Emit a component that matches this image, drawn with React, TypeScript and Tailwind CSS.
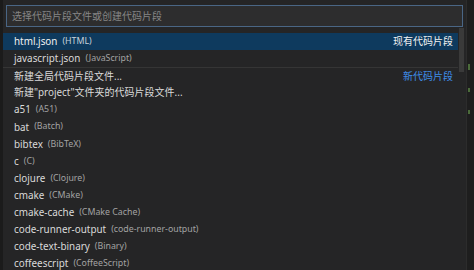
import React from "react";

const rows: { label: string; desc?: string; right?: string; rightBlue?: boolean; selected?: boolean; sepBefore?: boolean }[] = [
  { label: "html.json", desc: "(HTML)", right: "现有代码片段", selected: true },
  { label: "javascript.json", desc: "(JavaScript)" },
  { label: "新建全局代码片段文件...", right: "新代码片段", rightBlue: true, sepBefore: true },
  { label: "新建\"project\"文件夹的代码片段文件..." },
  { label: "a51", desc: "(A51)" },
  { label: "bat", desc: "(Batch)" },
  { label: "bibtex", desc: "(BibTeX)" },
  { label: "c", desc: "(C)" },
  { label: "clojure", desc: "(Clojure)" },
  { label: "cmake", desc: "(CMake)" },
  { label: "cmake-cache", desc: "(CMake Cache)" },
  { label: "code-runner-output", desc: "(code-runner-output)" },
  { label: "code-text-binary", desc: "(Binary)" },
  { label: "coffeescript", desc: "(CoffeeScript)" },
];

function Mixed({ text }: { text: string }) {
  const parts = text.split(/([\u4e00-\u9fff]+)/).filter((p) => p.length > 0);
  return (
    <>
      {parts.map((p, i) =>
        /[\u4e00-\u9fff]/.test(p) ? (
          <span key={i} className="text-[10px]">{p}</span>
        ) : (
          <span key={i}>{p}</span>
        )
      )}
    </>
  );
}

export default function App() {
  const font = { fontFamily: '"Noto Sans", "Noto Sans CJK SC", sans-serif' };
  return (
    <div className="w-[474px] h-[270px] bg-[#1e1e1e] flex overflow-hidden" style={font}>
      <div className="w-[3px] bg-[#1b1b1b]" />
      <div className="w-[463px] h-full bg-[#252526] flex flex-col relative">
        <div className="pl-[3px] pr-[3px] pt-[5px]">
          <div className="h-[22px] border border-[#4a6685] bg-[#2d2d2e] flex items-center pl-[5px] text-[10px] text-[#858585]">
            选择代码片段文件或创建代码片段
          </div>
        </div>
        <div className="mt-[6px] flex flex-col">
          {rows.map((r, i) => (
            <div
              key={i}
              className={
                "h-[17.1px] flex items-center pl-[11px] pr-[5px] mr-[8px] " +
                (r.selected ? "bg-[#0e3a5e] " : "") +
                (r.sepBefore ? "border-t border-[#353535] " : "")
              }
            >
              <span className={"text-[9.9px] whitespace-nowrap " + (r.selected ? "text-[#f2f2f2]" : "text-[#dadada]")}>
                <Mixed text={r.label} />
              </span>
              {r.desc && (
                <span className={"ml-[5px] text-[8.8px] whitespace-nowrap " + (r.selected ? "text-[#c8d2dc]" : "text-[#a3a3a3]")}>{r.desc}</span>
              )}
              <span className="flex-1" />
              {r.right && (
                <span className={"text-[10px] whitespace-nowrap " + (r.rightBlue ? "text-[#3f8ee8]" : "text-[#f2f2f2]")}>{r.right}</span>
              )}
            </div>
          ))}
        </div>
        <div className="absolute left-[456px] top-[28px] w-[5px] h-[44px] bg-[#3a3a3a]" />
      </div>
      <div className="flex-1 bg-[#1e1e1e] border-l border-[#2c2c2c] relative">
        <div className="absolute left-[1px] top-[64px] w-[2px] h-[6px] bg-[#4b6b3a]" />
        <div className="absolute left-[1px] top-[88px] w-[2px] h-[4px] bg-[#4b6b3a]" />
        <div className="absolute left-[1px] top-[110px] w-[2px] h-[4px] bg-[#4b6b3a]" />
      </div>
    </div>
  );
}
